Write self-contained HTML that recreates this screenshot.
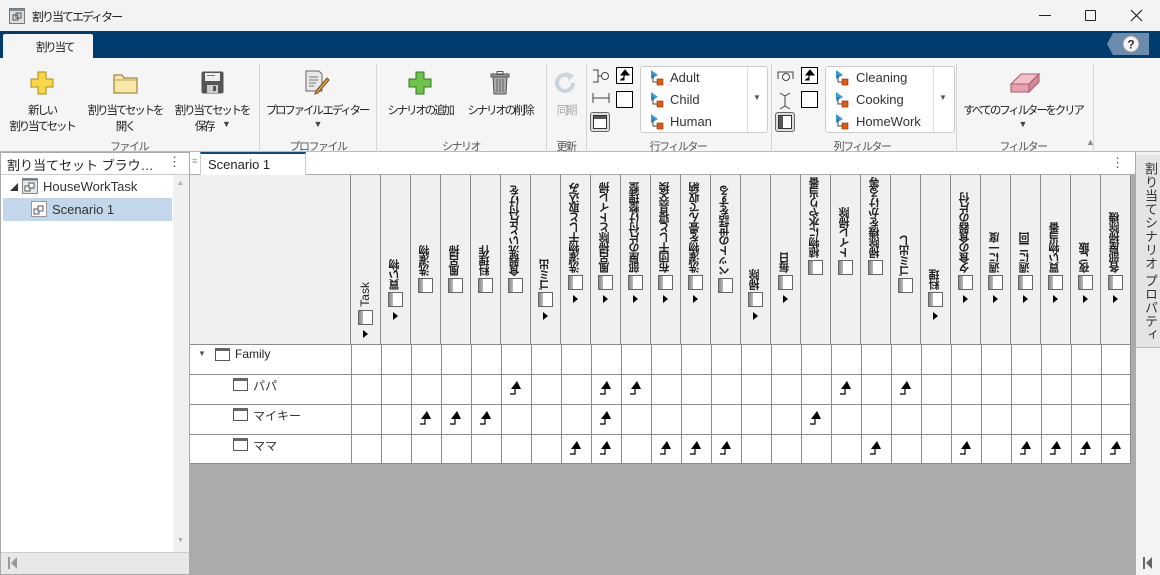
<!DOCTYPE html>
<html><head><meta charset="utf-8"><style>
*{margin:0;padding:0;box-sizing:border-box}
body{width:1160px;height:575px;overflow:hidden;background:#f3f3f3;font-family:"Liberation Sans","Noto Sans CJK JP",sans-serif;font-size:12px;color:#222;position:relative}
.a{position:absolute}
.t{position:absolute;white-space:nowrap}
.c{text-align:center;transform:translateX(-50%)}
.j{font-size:11.5px;letter-spacing:-2.2px}
.sep{position:absolute;top:64px;width:1px;height:88px;background:#d4d4d4}
.gl{position:absolute;top:138px;font-size:11px;letter-spacing:-1.5px;color:#555;transform:translateX(-50%);white-space:nowrap}
.hc{position:absolute;top:0;width:30px;height:169px;border-right:1px solid #8c8c8c;background:#f0f0f0}
.lab{position:absolute;left:8px;writing-mode:vertical-rl;transform:rotate(180deg);font-size:11px;line-height:13px;color:#222;white-space:nowrap;letter-spacing:-1px;font-weight:bold}
.ic{position:absolute;left:7px;width:15px;height:15px;border:1px solid #666;background:linear-gradient(90deg,#888 0,#bbb 4px,#fff 4px)}
.ar{position:absolute;left:12px;width:0;height:0;border-top:4px solid transparent;border-bottom:4px solid transparent;border-left:5px solid #000}
.vl{position:absolute;top:0;width:1px;height:120px;background:#8c8c8c}
.hl{position:absolute;left:0;width:941px;height:1px;background:#8c8c8c}
.mk{position:absolute;width:16px;height:16px}
</style></head><body>
<div class="a" style="left:0;top:0;width:1160px;height:31px;background:#f3f3f3"></div>
<svg class="a" style="left:9px;top:8px" width="16" height="16"><rect x="0.5" y="0.5" width="15" height="15" fill="#ddd" stroke="#777"/><rect x="1" y="1" width="14" height="2" fill="#7a8ca0"/><rect x="4" y="7" width="5" height="5" fill="none" stroke="#555"/><rect x="7" y="5" width="5" height="5" fill="none" stroke="#555"/></svg>
<div class="t" style="left:32px;top:8px;font-size:12px;letter-spacing:-2px">割り当てエディター</div>
<div class="a" style="left:1039px;top:15px;width:12px;height:1px;background:#222"></div>
<div class="a" style="left:1085px;top:10px;width:11px;height:11px;border:1px solid #222;border-radius:1px"></div>
<svg class="a" style="left:1130px;top:9px" width="13" height="13"><path d="M1 1L12 12M12 1L1 12" stroke="#222" stroke-width="1.2"/></svg>
<div class="a" style="left:0;top:31px;width:1160px;height:27px;background:#003d6e"></div>
<div class="a" style="left:3px;top:34px;width:90px;height:25px;background:#f5f5f5;border-radius:2px 2px 0 0"></div>
<div class="t j" style="left:36px;top:39px">割り当て</div>
<svg class="a" style="left:1105px;top:33px" width="44" height="22"><path d="M8 0H44V22H8L2 11Z" fill="#6a8bab"/><circle cx="26" cy="11" r="8" fill="#f4f4f4" stroke="#999"/><text x="26" y="15.5" font-size="12" font-weight="bold" text-anchor="middle" fill="#333" font-family="Liberation Sans">?</text></svg>
<div class="a" style="left:0;top:58px;width:1160px;height:94px;background:#f5f5f5;border-bottom:1px solid #bbb"></div>
<div class="sep" style="left:259px"></div><div class="sep" style="left:376px"></div><div class="sep" style="left:546px"></div><div class="sep" style="left:586px"></div><div class="sep" style="left:771px"></div><div class="sep" style="left:956px"></div><div class="sep" style="left:1093px"></div>
<svg class="a" style="left:30px;top:71px" width="24" height="24"><path d="M8 1H16V8H23V16H16V23H8V16H1V8H8Z" fill="#f7d64a" stroke="#b08a10"/></svg>
<div class="t c j" style="left:42px;top:102px">新しい</div><div class="t c j" style="left:42px;top:118px">割り当てセット</div>
<svg class="a" style="left:113px;top:72px" width="26" height="22"><path d="M1 3H9L11 6H24V21H1Z" fill="#f6e8a8" stroke="#8a7020"/><path d="M1 8H24" stroke="#c0a050"/></svg>
<div class="t c j" style="left:125px;top:102px">割り当てセットを</div><div class="t c j" style="left:125px;top:118px">開く</div>
<svg class="a" style="left:201px;top:71px" width="23" height="23"><rect x="0.5" y="0.5" width="22" height="22" rx="2" fill="#555"/><rect x="4" y="2" width="15" height="8" fill="#eee"/><rect x="6" y="4" width="8" height="1" fill="#777"/><rect x="6" y="14" width="11" height="8" fill="#ccc"/><rect x="12" y="15" width="3" height="5" fill="#555"/></svg>
<div class="t c j" style="left:212px;top:102px">割り当てセットを</div><div class="t c j" style="left:204px;top:118px">保存</div><div class="t" style="left:222px;top:119px;font-size:9px;color:#444">▼</div>
<svg class="a" style="left:304px;top:69px" width="26" height="26"><path d="M2 2H15L18 5V22H2Z" fill="#e8e8e8" stroke="#666"/><path d="M5 8H14M5 11H14M5 14H12M5 17H10" stroke="#777"/><path d="M12 22L23 9L25 11L14 24L11 25Z" fill="#e0a040" stroke="#7a4a20"/></svg>
<div class="t c j" style="left:317px;top:102px">プロファイル エディター</div><div class="t c" style="left:318px;top:119px;font-size:9px;color:#444">▼</div>
<svg class="a" style="left:408px;top:71px" width="24" height="24"><path d="M8 1H16V8H23V16H16V23H8V16H1V8H8Z" fill="#6fc24a" stroke="#2f7a20"/></svg>
<div class="t c j" style="left:420px;top:102px">シナリオの追加</div>
<svg class="a" style="left:490px;top:71px" width="20" height="24"><rect x="1" y="3" width="18" height="3" fill="#999" stroke="#555"/><rect x="7" y="0.5" width="6" height="3" fill="none" stroke="#555"/><path d="M3 6H17L16 23H4Z" fill="#aaa" stroke="#555"/><path d="M7 8V21M10 8V21M13 8V21" stroke="#666"/></svg>
<div class="t c j" style="left:500px;top:102px">シナリオの削除</div>
<svg class="a" style="left:553px;top:71px" width="24" height="24"><path d="M20 12A8 8 0 1 1 16 5" fill="none" stroke="#c8d4e0" stroke-width="4"/><path d="M13 1L21 4L16 10Z" fill="#c8d4e0"/></svg>
<div class="t c j" style="left:566px;top:102px;color:#aaa">同期</div>
<div class="gl" style="left:129px">ファイル</div><div class="gl" style="left:318px">プロファイル</div><div class="gl" style="left:461px">シナリオ</div><div class="gl" style="left:566px">更新</div><div class="gl" style="left:678px">行フィルター</div><div class="gl" style="left:862px">列フィルター</div><div class="gl" style="left:1023px">フィルター</div>
<svg class="a" style="left:591px;top:67px" width="20" height="20"><path d="M2 3H7V9H11" fill="none" stroke="#444"/><circle cx="14" cy="9" r="3.5" fill="#fff" stroke="#444"/><path d="M7 9V15H2" fill="none" stroke="#444"/></svg>
<svg class="a" style="left:591px;top:91px" width="20" height="14"><path d="M2 2V12M2 7H18M18 2V12" fill="none" stroke="#444"/></svg>
<div class="a" style="left:616px;top:67px;width:17px;height:17px;border:1.5px solid #000;background:#fff"></div>
<svg class="a" style="left:618px;top:69px" width="13" height="13"><path d="M2 11H6V6H3L7 1L11 6H8" fill="#000" stroke="#000"/></svg>
<div class="a" style="left:616px;top:91px;width:17px;height:17px;border:1.5px solid #000;background:#fff"></div>
<div class="a" style="left:590px;top:112px;width:20px;height:20px;border:1px solid #666;border-radius:3px;background:#ddd"></div>
<div class="a" style="left:593px;top:115px;width:14px;height:14px;border:1.5px solid #333;background:linear-gradient(#555 0,#555 3px,#fff 3px)"></div>
<div class="a" style="left:640px;top:66px;width:128px;height:67px;background:#fff;border:1px solid #ccc;border-radius:3px"></div>
<div class="a" style="left:747px;top:67px;width:1px;height:65px;background:#ddd"></div>
<div class="t" style="left:753px;top:93px;font-size:8px;color:#555">▼</div>
<svg class="a" style="left:650px;top:69px" width="20" height="18"><path d="M1 1L8 6L1 10Z" fill="#3a9ad8"/><path d="M3 6V13H7" fill="none" stroke="#444"/><rect x="7" y="10" width="6" height="6" fill="#e05a10" stroke="#8a2a00" stroke-width=".6"/></svg>
<svg class="a" style="left:650px;top:91px" width="20" height="18"><path d="M1 1L8 6L1 10Z" fill="#3a9ad8"/><path d="M3 6V13H7" fill="none" stroke="#444"/><rect x="7" y="10" width="6" height="6" fill="#e05a10" stroke="#8a2a00" stroke-width=".6"/></svg>
<svg class="a" style="left:650px;top:113px" width="20" height="18"><path d="M1 1L8 6L1 10Z" fill="#3a9ad8"/><path d="M3 6V13H7" fill="none" stroke="#444"/><rect x="7" y="10" width="6" height="6" fill="#e05a10" stroke="#8a2a00" stroke-width=".6"/></svg>
<div class="t" style="left:670px;top:70px;font-size:13px;color:#333">Adult</div>
<div class="t" style="left:670px;top:92px;font-size:13px;color:#333">Child</div>
<div class="t" style="left:670px;top:114px;font-size:13px;color:#333">Human</div>
<svg class="a" style="left:776px;top:67px" width="20" height="20"><path d="M2 12V5H10" fill="none" stroke="#444"/><circle cx="10" cy="10" r="3.5" fill="#fff" stroke="#444"/><path d="M17 12V5H10" fill="none" stroke="#444"/></svg>
<svg class="a" style="left:778px;top:91px" width="14" height="20"><path d="M2 2L7 5L12 2M7 5V15M2 18L7 15L12 18" fill="none" stroke="#444"/></svg>
<div class="a" style="left:801px;top:67px;width:17px;height:17px;border:1.5px solid #000;background:#fff"></div>
<svg class="a" style="left:803px;top:69px" width="13" height="13"><path d="M2 11H6V6H3L7 1L11 6H8" fill="#000" stroke="#000"/></svg>
<div class="a" style="left:801px;top:91px;width:17px;height:17px;border:1.5px solid #000;background:#fff"></div>
<div class="a" style="left:775px;top:112px;width:20px;height:20px;border:1px solid #666;border-radius:3px;background:#ddd"></div>
<div class="a" style="left:778px;top:115px;width:14px;height:14px;border:1.5px solid #333;background:linear-gradient(90deg,#555 0,#555 4px,#fff 4px)"></div>
<div class="a" style="left:825px;top:66px;width:130px;height:67px;background:#fff;border:1px solid #ccc;border-radius:3px"></div>
<div class="a" style="left:933px;top:67px;width:1px;height:65px;background:#ddd"></div>
<div class="t" style="left:939px;top:93px;font-size:8px;color:#555">▼</div>
<svg class="a" style="left:835px;top:69px" width="20" height="18"><path d="M1 1L8 6L1 10Z" fill="#3a9ad8"/><path d="M3 6V13H7" fill="none" stroke="#444"/><rect x="7" y="10" width="6" height="6" fill="#e05a10" stroke="#8a2a00" stroke-width=".6"/></svg>
<svg class="a" style="left:835px;top:91px" width="20" height="18"><path d="M1 1L8 6L1 10Z" fill="#3a9ad8"/><path d="M3 6V13H7" fill="none" stroke="#444"/><rect x="7" y="10" width="6" height="6" fill="#e05a10" stroke="#8a2a00" stroke-width=".6"/></svg>
<svg class="a" style="left:835px;top:113px" width="20" height="18"><path d="M1 1L8 6L1 10Z" fill="#3a9ad8"/><path d="M3 6V13H7" fill="none" stroke="#444"/><rect x="7" y="10" width="6" height="6" fill="#e05a10" stroke="#8a2a00" stroke-width=".6"/></svg>
<div class="t" style="left:856px;top:70px;font-size:13px;color:#333">Cleaning</div>
<div class="t" style="left:856px;top:92px;font-size:13px;color:#333">Cooking</div>
<div class="t" style="left:856px;top:114px;font-size:13px;color:#333">HomeWork</div>
<svg class="a" style="left:1009px;top:70px" width="32" height="24"><path d="M2 14L12 4H30L20 14Z" fill="#f3c0c8" stroke="#a06070"/><path d="M2 14H20V22H2Z" fill="#e8a0ae" stroke="#a06070"/><path d="M20 14L30 4V12L20 22Z" fill="#d88898" stroke="#a06070"/></svg>
<div class="t c j" style="left:1023px;top:102px">すべてのフィルターをクリア</div><div class="t c" style="left:1023px;top:119px;font-size:9px;color:#444">▼</div>
<div class="t" style="left:1086px;top:137px;font-size:9px;color:#888">▲</div>
<div class="a" style="left:0;top:152px;width:190px;height:423px;background:#fff;border:1px solid #aaa"></div>
<div class="a" style="left:1px;top:174px;width:188px;height:1px;background:#ccc"></div>
<div class="t" style="left:7px;top:155px;font-size:13px">割り当てセット ブラウ…</div>
<div class="t" style="left:168px;top:154px;font-size:13px;color:#555">⋮</div>
<div class="a" style="left:173px;top:175px;width:16px;height:377px;background:#f0f0f0"></div>
<div class="t" style="left:177px;top:180px;font-size:7px;color:#aaa">▲</div>
<div class="t" style="left:177px;top:537px;font-size:7px;color:#aaa">▼</div>
<div class="a" style="left:3px;top:198px;width:169px;height:23px;background:#c2d7ea"></div>
<div class="t" style="left:10px;top:182px;font-size:8px;color:#333">◢</div>
<svg class="a" style="left:22px;top:178px" width="16" height="16"><rect x=".5" y=".5" width="15" height="15" fill="#e6e6e6" stroke="#888"/><rect x="1" y="1" width="14" height="1.5" fill="#5a7aa0"/><rect x="3" y="8" width="5" height="5" fill="#fff" stroke="#555"/><rect x="7" y="5" width="5" height="5" fill="#fff" stroke="#555"/></svg>
<div class="t" style="left:43px;top:179px;font-size:13px;color:#333">HouseWorkTask</div>
<svg class="a" style="left:31px;top:201px" width="16" height="16"><rect x=".5" y=".5" width="15" height="15" fill="#fff" stroke="#999"/><rect x="3" y="8" width="5" height="5" fill="#fff" stroke="#555"/><rect x="7" y="5" width="5" height="5" fill="#fff" stroke="#555"/></svg>
<div class="t" style="left:52px;top:202px;font-size:13px;color:#333">Scenario 1</div>
<div class="a" style="left:1px;top:552px;width:188px;height:22px;background:#e8e8e8;border-top:1px solid #ccc"></div>
<svg class="a" style="left:8px;top:556px" width="10" height="14"><rect x="0" y="1" width="2" height="12" fill="#999"/><path d="M9 1L3 7L9 13Z" fill="#999"/></svg>
<div class="a" style="left:190px;top:152px;width:945px;height:23px;background:#fff;border-bottom:1px solid #aaa"></div>
<div class="t" style="left:192px;top:156px;font-size:9px;color:#999">≡</div>
<div class="a" style="left:200px;top:152px;width:106px;height:23px;background:#fff;border-left:1px solid #ccc;border-right:1px solid #ccc;border-top:2px solid #0a4a80"></div>
<div class="t" style="left:208px;top:157px;font-size:13px;color:#222">Scenario 1</div>
<div class="t" style="left:1111px;top:155px;font-size:13px;color:#555">⋮</div>
<div class="a" style="left:190px;top:175px;width:945px;height:400px;background:#ababab"></div>
<div class="a" style="left:190px;top:175px;width:941px;height:289px;background:#fff"></div>
<div class="a" style="left:190px;top:175px;width:941px;height:169px;background:#f0f0f0">
<div class="hc" style="left:0;width:161px"></div>
</div>
<div class="a" style="left:351px;top:175px;width:780px;height:169px">
<div class="hc" style="left:0"><div class="lab" style="bottom:37px;font-family:'Liberation Sans';font-size:12px;letter-spacing:0;font-weight:normal">Task</div><div class="ic" style="top:135px"></div><div class="ar" style="top:155px"></div></div>
<div class="hc" style="left:30px"><div class="lab" style="bottom:54px">買い物</div><div class="ic" style="top:117px"></div><div class="ar" style="top:137px"></div></div>
<div class="hc" style="left:60px"><div class="lab" style="bottom:68px">洗濯物</div><div class="ic" style="top:103px"></div></div>
<div class="hc" style="left:90px"><div class="lab" style="bottom:68px">風呂掃</div><div class="ic" style="top:103px"></div></div>
<div class="hc" style="left:120px"><div class="lab" style="bottom:68px">料理作</div><div class="ic" style="top:103px"></div></div>
<div class="hc" style="left:150px"><div class="lab" style="bottom:68px">食器洗いと片付けを</div><div class="ic" style="top:103px"></div></div>
<div class="hc" style="left:180px"><div class="lab" style="bottom:54px">ゴミ出</div><div class="ic" style="top:117px"></div><div class="ar" style="top:137px"></div></div>
<div class="hc" style="left:210px"><div class="lab" style="bottom:71px">洗濯物干しと取込み</div><div class="ic" style="top:100px"></div><div class="ar" style="top:120px"></div></div>
<div class="hc" style="left:240px"><div class="lab" style="bottom:71px">風呂掃除とトイレ掃</div><div class="ic" style="top:100px"></div><div class="ar" style="top:120px"></div></div>
<div class="hc" style="left:270px"><div class="lab" style="bottom:71px">部屋の片付け整理整</div><div class="ic" style="top:100px"></div><div class="ar" style="top:120px"></div></div>
<div class="hc" style="left:300px"><div class="lab" style="bottom:71px">布団干しと寝具交換</div><div class="ic" style="top:100px"></div><div class="ar" style="top:120px"></div></div>
<div class="hc" style="left:330px"><div class="lab" style="bottom:71px">洗濯物を畳んで収納</div><div class="ic" style="top:100px"></div><div class="ar" style="top:120px"></div></div>
<div class="hc" style="left:360px"><div class="lab" style="bottom:68px">ペットの世話をする</div><div class="ic" style="top:103px"></div></div>
<div class="hc" style="left:390px"><div class="lab" style="bottom:54px">掃除</div><div class="ic" style="top:117px"></div><div class="ar" style="top:137px"></div></div>
<div class="hc" style="left:420px"><div class="lab" style="bottom:71px">毎日</div><div class="ic" style="top:100px"></div><div class="ar" style="top:120px"></div></div>
<div class="hc" style="left:450px"><div class="lab" style="bottom:86px">植物に水やり当番</div><div class="ic" style="top:85px"></div></div>
<div class="hc" style="left:480px"><div class="lab" style="bottom:86px">トイレ掃除</div><div class="ic" style="top:85px"></div></div>
<div class="hc" style="left:510px"><div class="lab" style="bottom:86px">掃除機をかける等</div><div class="ic" style="top:85px"></div></div>
<div class="hc" style="left:540px"><div class="lab" style="bottom:68px">ゴミ出し</div><div class="ic" style="top:103px"></div></div>
<div class="hc" style="left:570px"><div class="lab" style="bottom:54px">料理</div><div class="ic" style="top:117px"></div><div class="ar" style="top:137px"></div></div>
<div class="hc" style="left:600px"><div class="lab" style="bottom:71px">夕食の食器の片付</div><div class="ic" style="top:100px"></div><div class="ar" style="top:120px"></div></div>
<div class="hc" style="left:630px"><div class="lab" style="bottom:71px">週に一度</div><div class="ic" style="top:100px"></div><div class="ar" style="top:120px"></div></div>
<div class="hc" style="left:660px"><div class="lab" style="bottom:71px">週に二回</div><div class="ic" style="top:100px"></div><div class="ar" style="top:120px"></div></div>
<div class="hc" style="left:690px"><div class="lab" style="bottom:71px">買い物当番</div><div class="ic" style="top:100px"></div><div class="ar" style="top:120px"></div></div>
<div class="hc" style="left:720px"><div class="lab" style="bottom:71px">夜ご飯</div><div class="ic" style="top:100px"></div><div class="ar" style="top:120px"></div></div>
<div class="hc" style="left:750px"><div class="lab" style="bottom:71px">各部屋掃除機</div><div class="ic" style="top:100px"></div><div class="ar" style="top:120px"></div></div>
</div>
<div class="a" style="left:190px;top:344px;width:941px;height:120px">
<div class="hl" style="top:0"></div><div class="hl" style="top:30px"></div><div class="hl" style="top:60px"></div><div class="hl" style="top:90px"></div><div class="hl" style="top:119px"></div>
<div class="vl" style="left:161px"></div><div class="vl" style="left:191px"></div><div class="vl" style="left:221px"></div><div class="vl" style="left:251px"></div><div class="vl" style="left:281px"></div><div class="vl" style="left:311px"></div><div class="vl" style="left:341px"></div><div class="vl" style="left:371px"></div><div class="vl" style="left:401px"></div><div class="vl" style="left:431px"></div><div class="vl" style="left:461px"></div><div class="vl" style="left:491px"></div><div class="vl" style="left:521px"></div><div class="vl" style="left:551px"></div><div class="vl" style="left:581px"></div><div class="vl" style="left:611px"></div><div class="vl" style="left:641px"></div><div class="vl" style="left:671px"></div><div class="vl" style="left:701px"></div><div class="vl" style="left:731px"></div><div class="vl" style="left:761px"></div><div class="vl" style="left:791px"></div><div class="vl" style="left:821px"></div><div class="vl" style="left:851px"></div><div class="vl" style="left:881px"></div><div class="vl" style="left:911px"></div><div class="vl" style="left:940px"></div>
</div>
<div class="t" style="left:198px;top:349px;font-size:8px;color:#555">▼</div>
<div class="a" style="left:215px;top:348px;width:15px;height:13px;border:1px solid #555;border-top:3px solid #666"></div>
<div class="t" style="left:235px;top:347px;font-size:12px">Family</div>
<div class="a" style="left:233px;top:378px;width:15px;height:13px;border:1px solid #555;border-top:3px solid #666"></div>
<div class="t" style="left:253px;top:377px;font-size:12px;color:#333">パパ</div>
<div class="a" style="left:233px;top:408px;width:15px;height:13px;border:1px solid #555;border-top:3px solid #666"></div>
<div class="t" style="left:253px;top:407px;font-size:12px;color:#333">マイキー</div>
<div class="a" style="left:233px;top:438px;width:15px;height:13px;border:1px solid #555;border-top:3px solid #666"></div>
<div class="t" style="left:253px;top:437px;font-size:12px;color:#333">ママ</div>
<svg width="0" height="0" style="position:absolute"><defs><symbol id="m" viewBox="0 0 16 16"><path d="M1 14H6V7" fill="none" stroke="#000" stroke-width="1.2"/><path d="M2 9L8 1L12 9Z" fill="#000"/></symbol></defs></svg>
<svg class="mk" style="left:509px;top:380px"><use href="#m"/></svg>
<svg class="mk" style="left:599px;top:380px"><use href="#m"/></svg>
<svg class="mk" style="left:629px;top:380px"><use href="#m"/></svg>
<svg class="mk" style="left:839px;top:380px"><use href="#m"/></svg>
<svg class="mk" style="left:899px;top:380px"><use href="#m"/></svg>
<svg class="mk" style="left:419px;top:410px"><use href="#m"/></svg>
<svg class="mk" style="left:449px;top:410px"><use href="#m"/></svg>
<svg class="mk" style="left:479px;top:410px"><use href="#m"/></svg>
<svg class="mk" style="left:599px;top:410px"><use href="#m"/></svg>
<svg class="mk" style="left:809px;top:410px"><use href="#m"/></svg>
<svg class="mk" style="left:569px;top:440px"><use href="#m"/></svg>
<svg class="mk" style="left:599px;top:440px"><use href="#m"/></svg>
<svg class="mk" style="left:659px;top:440px"><use href="#m"/></svg>
<svg class="mk" style="left:689px;top:440px"><use href="#m"/></svg>
<svg class="mk" style="left:719px;top:440px"><use href="#m"/></svg>
<svg class="mk" style="left:869px;top:440px"><use href="#m"/></svg>
<svg class="mk" style="left:959px;top:440px"><use href="#m"/></svg>
<svg class="mk" style="left:1019px;top:440px"><use href="#m"/></svg>
<svg class="mk" style="left:1049px;top:440px"><use href="#m"/></svg>
<svg class="mk" style="left:1079px;top:440px"><use href="#m"/></svg>
<svg class="mk" style="left:1109px;top:440px"><use href="#m"/></svg>
<div class="a" style="left:1135px;top:152px;width:25px;height:423px;background:#f3f3f3;border-left:1px solid #aaa"></div>
<div class="a" style="left:1136px;top:155px;width:24px;height:193px;background:#e4e4e4;border-bottom:1px solid #bbb"></div>
<div class="t" style="left:1141px;top:162px;writing-mode:vertical-rl;font-size:13px;letter-spacing:0.5px;color:#333">割り当てシナリオ プロパティ</div>
<svg class="a" style="left:1143px;top:556px" width="10" height="14"><rect x="0" y="1" width="2" height="12" fill="#666"/><path d="M9 1L3 7L9 13Z" fill="#666"/></svg>
</body></html>
